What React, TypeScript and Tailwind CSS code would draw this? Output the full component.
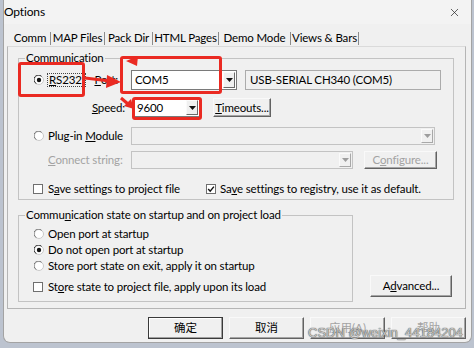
import { X } from "lucide-react";

const RED = "#ea2a22";

function Radio({ checked = false }: { checked?: boolean }) {
  return (
    <svg width="10" height="10" viewBox="0 0 10 10" className="shrink-0">
      <circle cx="5" cy="5" r="4.5" fill="#fff" stroke="#c9c9c9" />
      <path d="M7.6 1.4 A4.5 4.5 0 1 0 2.4 8.6" fill="none" stroke={checked ? "#333" : "#7a7a7a"} />
      {checked && <circle cx="5" cy="5" r="2.2" fill="#111" />}
    </svg>
  );
}

function Check({ checked = false }: { checked?: boolean }) {
  return (
    <svg width="10" height="10" viewBox="0 0 10 10" className="shrink-0">
      <rect x="0.5" y="0.5" width="9" height="9" fill="#fff" stroke="#6f6f6f" />
      {checked && <path d="M2.2 5 L4.2 7.2 L7.9 2.6" fill="none" stroke="#111" strokeWidth="1.4" />}
    </svg>
  );
}

function Caret({ disabled = false }: { disabled?: boolean }) {
  return (
    <svg width="7" height="4" viewBox="0 0 7 4">
      <polygon points="0,0 7,0 3.5,4" fill={disabled ? "#9d9d9d" : "#111"} />
    </svg>
  );
}

function Combo({ value = "", className = "", disabled = false }: { value?: string; className?: string; disabled?: boolean }) {
  return (
    <div
      className={`flex h-full items-stretch border ${
        disabled ? "border-[#c3c3c3] bg-[#f0f0f0]" : "border-[#7a7a7a] bg-white"
      } ${className}`}
    >
      <span className="flex flex-1 items-center pl-[3px]">{value}</span>
      <span
        className={`m-[1px] flex w-[12px] items-center justify-center border border-t-[#fafafa] border-l-[#fafafa] bg-[#f0f0f0] ${
          disabled ? "border-r-[#a8a8a8] border-b-[#a8a8a8]" : "border-r-[#6a6a6a] border-b-[#6a6a6a]"
        }`}
      >
        <Caret disabled={disabled} />
      </span>
    </div>
  );
}

function Btn({
  children,
  className = "",
  disabled = false,
  primary = false,
}: {
  children: React.ReactNode;
  className?: string;
  disabled?: boolean;
  primary?: boolean;
}) {
  return (
    <div
      className={`flex items-center justify-center whitespace-nowrap border bg-[#f0f0f0] ${
        primary
          ? "border-[#3a3a3a] shadow-[inset_-1px_-1px_0_#a0a0a0,inset_1px_1px_0_#ffffff]"
          : "border-t-[#f9f9f9] border-l-[#f9f9f9] border-r-[#626262] border-b-[#626262] shadow-[inset_-1px_-1px_0_#a5a5a5]"
      } ${disabled ? "text-[#a3a3a3]" : "text-black"} ${className}`}
    >
      {children}
    </div>
  );
}

export default function App() {
  const tabs = [
    { label: "Comm", w: "w-[40px]" },
    { label: "MAP Files", w: "w-[53px]" },
    { label: "Pack Dir", w: "w-[47px]" },
    { label: "HTML Pages", w: "w-[65px]" },
    { label: "Demo Mode", w: "w-[71px]" },
    { label: "Views & Bars", w: "w-[67px]" },
  ];

  return (
    <div className="relative h-[348px] w-[474px] overflow-hidden whitespace-nowrap bg-[#bcc3cf] font-[Lato,'Noto_Sans_CJK_SC',sans-serif] text-[11.5px] tracking-[-0.15px] text-black">
      <div className="ml-[3px] flex h-[343px] w-[469px] flex-col rounded-b-[7px] border-x border-b border-[#a3a3a3] bg-[#f0f0f0]">
        {/* title bar */}
        <div className="flex h-[24px] items-center justify-between bg-[#f3f3f3] pr-[10px]">
          <span className="text-[12px]">Options</span>
          <X size={13} strokeWidth={1.3} color="#222" />
        </div>

        {/* tabs */}
        <div className="flex h-[22px] items-end pl-[6px]">
          {tabs.map((t) => (
            <div key={t.label} className="flex items-end">
              <div className={`flex h-[17px] items-center justify-center ${t.w}`}>{t.label}</div>
              <span className="mb-[1px] h-[13px] w-px bg-[#8c8c8c]" />
            </div>
          ))}
        </div>

        {/* panel */}
        <div className="ml-[3px] h-[263px] w-[459px] border border-[#b5b5b5] border-t-[#dadada]">
          <fieldset className="ml-[10px] mt-[4px] w-[436px] border border-[#c3c3c3] px-0 pb-[2px]">
            <legend className="ml-[6px] px-[1px] leading-[14px]">Communication</legend>
            <div className="pl-[15px]">
              <div className="mt-[5px] flex h-[20px] items-center">
                <div className="flex w-[97px] items-center">
                  <Radio checked />
                  <span className="ml-[3px] border border-dotted border-[#444] px-[1px] leading-[12px]">
                    <u>R</u>S232:
                  </span>
                  <span className="ml-auto mr-[13px]">
                    <u>P</u>ort:
                  </span>
                </div>
                <Combo value="COM5" className="w-[106px]" />
                <div className="ml-[8px] flex h-full w-[196px] items-center border border-[#ababab] bg-[#f0f0f0] pl-[4px]">
                  USB-SERIAL CH340 (COM5)
                </div>
              </div>

              <div className="mt-[8px] flex h-[19px] items-center">
                <span className="w-[99px] pr-[8px] text-right">
                  <u>S</u>peed:
                </span>
                <Combo value="9600" className="w-[67px]" />
                <Btn className="ml-[13px] h-full w-[58px]">
                  <span>
                    <u>T</u>imeouts...
                  </span>
                </Btn>
              </div>

              <div className="mt-[10px] flex h-[18px] items-center">
                <div className="flex w-[97px] items-center">
                  <Radio />
                  <span className="ml-[4px]">
                    Plug-in <u>M</u>odule
                  </span>
                </div>
                <Combo disabled className="w-[304px]" />
              </div>

              <div className="mt-[6px] flex h-[18px] items-center">
                <span className="w-[97px] pl-[14px] text-[#a3a3a3]">
                  <u>C</u>onnect string:
                </span>
                <Combo disabled className="w-[222px]" />
                <Btn disabled className="ml-[11px] h-full w-[73px]">
                  <span>
                    C<u>o</u>nfigure...
                  </span>
                </Btn>
              </div>

              <div className="-ml-[1px] mt-[12px] flex h-[16px] items-center">
                <div className="flex w-[173px] items-center">
                  <Check />
                  <span className="ml-[5px]">
                    S<u>a</u>ve settings to project file
                  </span>
                </div>
                <Check checked />
                <span className="ml-[4px]">
                  Sa<u>v</u>e settings to registry, use it as default.
                </span>
              </div>
            </div>
          </fieldset>

          <div className="flex items-end">
            <fieldset className="ml-[10px] mt-[8px] w-[335px] border border-[#c3c3c3] px-0 pb-[6px]">
              <legend className="ml-[6px] px-[1px] leading-[14px]">
                Commu<u>n</u>ication state on startup and on project load
              </legend>
              <div className="pl-[15px]">
                <div className="mt-[4px] flex h-[16px] items-center">
                  <Radio />
                  <span className="ml-[4px]">Open port at startup</span>
                </div>
                <div className="flex h-[16px] items-center">
                  <Radio checked />
                  <span className="ml-[4px]">Do not open port at startup</span>
                </div>
                <div className="flex h-[16px] items-center">
                  <Radio />
                  <span className="ml-[4px]">Store port state on exit, apply it on startup</span>
                </div>
                <div className="-ml-[1px] mt-[5px] flex h-[16px] items-center">
                  <Check />
                  <span className="ml-[5px]">
                    St<u>o</u>re state to project file, apply upon its load
                  </span>
                </div>
              </div>
            </fieldset>
            <Btn className="mb-[5px] ml-[17px] h-[22px] w-[82px]">
              <span>
                A<u>d</u>vanced...
              </span>
            </Btn>
          </div>
        </div>

        {/* dialog buttons */}
        <div className="mt-[8px] flex gap-[6px] pl-[144px] tracking-normal">
          <Btn primary className="h-[22px] w-[75px]">确定</Btn>
          <Btn className="h-[22px] w-[75px]">取消</Btn>
          <Btn disabled className="h-[22px] w-[75px]">应用(A)</Btn>
          <Btn disabled className="h-[22px] w-[75px]">帮助</Btn>
        </div>
      </div>

      {/* red annotations */}
      <div className="absolute left-[18px] top-[62px] h-[35px] w-[67px] rounded-[3px] border-[3px] border-[#ea2a22]" />
      <div className="absolute left-[120px] top-[56px] h-[38px] w-[102px] rounded-[3px] border-[3px] border-[#ea2a22]" />
      <div className="absolute left-[132px] top-[97px] h-[23px] w-[70px] rounded-[3px] border-[3px] border-[#ea2a22]" />
      <svg className="pointer-events-none absolute left-0 top-0" width="474" height="348">
        <line x1="85" y1="78" x2="110" y2="81" stroke={RED} strokeWidth="3" />
        <polygon points="121,82 107,75 106,88" fill={RED} />
        <polygon points="126,61 138,56 137,66" fill={RED} />
        <line x1="121" y1="98" x2="128" y2="104" stroke={RED} strokeWidth="3" />
        <polygon points="134,109 124,106 131,99" fill={RED} />
      </svg>

      {/* watermark */}
      <div className="absolute left-[308px] top-[324px] font-['Liberation_Sans',sans-serif] text-[13px] leading-[18px] tracking-normal text-[#c4c4c4] [text-shadow:0_0_1px_#555,0_0_1px_#555]">
        CSDN @weixin_44184204
      </div>
    </div>
  );
}
